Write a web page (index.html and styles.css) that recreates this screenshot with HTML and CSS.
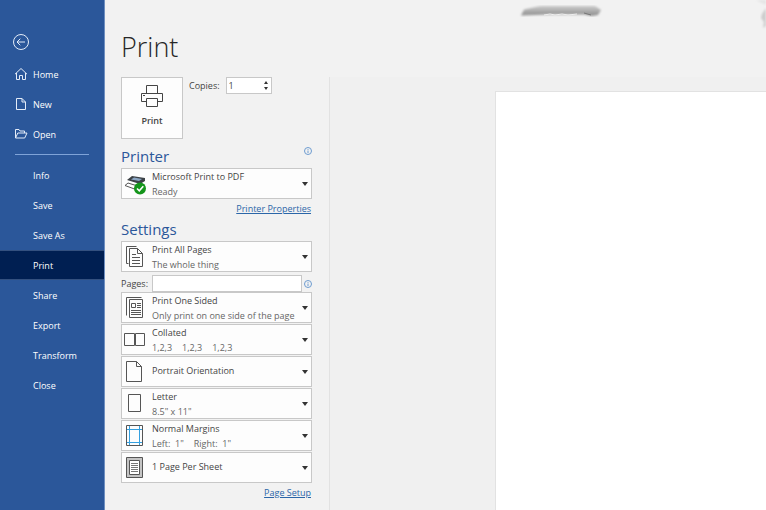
FILE: index.html
```html
<!DOCTYPE html>
<html lang="en">
<head>
  <meta charset="UTF-8">
  <meta name="viewport" content="width=device-width, initial-scale=1">
  <title>Print</title>
  <link rel="stylesheet" href="styles.css">
</head>
<body>
<nav class="sidebar">
  <button class="back" type="button" aria-label="Back">
    <svg width="18" height="18" viewBox="0 0 18 18"><circle cx="9" cy="9" r="7.5"/><path d="M13 9H5M8.3 5.7L5 9l3.3 3.3"/></svg>
  </button>
  <a href="#home"><svg width="14" height="14" viewBox="0 0 14 14"><path d="M1 7.2L7 1.500l6 5.700M2.500 6v6.500h3V8.500h3v4h3V6"/></svg>Home</a>
  <a href="#new"><svg width="14" height="14" viewBox="0 0 14 14"><path d="M2.500 1.500h5.500l3.500 3.500v7.500h-9zM8 1.500V5h3.500"/></svg>New</a>
  <a href="#open"><svg width="14" height="14" viewBox="0 0 14 14"><path d="M1.500 11V2.500h3.500l1 1.500h4.500v2M1.500 11l2.300-5H13l-2.300 5z"/></svg>Open</a>
  <hr>
  <a href="#info">Info</a>
  <a href="#save">Save</a>
  <a href="#save-as">Save As</a>
  <a href="#print" class="active" aria-current="page">Print</a>
  <a href="#share">Share</a>
  <a href="#export">Export</a>
  <a href="#transform">Transform</a>
  <a href="#close">Close</a>
</nav>

<main>
  <h1>Print</h1>
  <div class="panes">
    <form class="settings">
      <div class="top-row">
        <button class="print-btn" type="button">
          <svg width="24" height="24" viewBox="0 0 24 24"><path d="M6.500 9.500V1.500h11v8M6.500 17.500h-5v-8h21v8h-5M6.500 14.500h11v8h-11zM3 11.500h2"/></svg>
          Print
        </button>
        <label for="copies">Copies:</label>
        <div class="spinner">
          <input id="copies" type="number" value="1" min="1">
          <div class="steps">
            <button type="button" aria-label="More copies"><svg width="4" height="3" viewBox="0 0 4 3"><path d="M0 3l2-3 2 3z"/></svg></button>
            <button type="button" aria-label="Fewer copies"><svg width="4" height="3" viewBox="0 0 4 3"><path d="M0 0l2 3 2-3z"/></svg></button>
          </div>
        </div>
      </div>

      <div class="heading">
        <h2>Printer</h2>
        <svg class="info" width="8" height="8" viewBox="0 0 8 8"><circle cx="4" cy="4" r="3.500"/><path d="M4 3.500v2.500M4 2v.8"/></svg>
      </div>
      <div class="option two-line">
        <select aria-label="Printer"><option>Microsoft Print to PDF</option></select>
        <svg class="icon" width="26" height="26" viewBox="0 0 26 26">
          <path d="M5 10l5-4 13 2v3l-5 3z" fill="#3c4146"/>
          <path d="M9 9.500l3-2 8 1.500-3 2z" fill="#8ba6c4"/>
          <path d="M3 15.500l3-2.500 8 2.500-1.500 3.500z" fill="#fff" stroke="#555"/>
          <circle cx="18" cy="18.500" r="6" fill="#14951b"/>
          <path d="M15 18.500l2.300 2.300 4-4.500" fill="none" stroke="#fff" stroke-width="1.600"/>
        </svg>
        <span class="hint">Ready</span>
      </div>
      <a class="more" href="#printer-properties">Printer Properties</a>

      <div class="heading">
        <h2>Settings</h2>
      </div>
      <div class="option two-line">
        <select aria-label="Pages to print"><option>Print All Pages</option></select>
        <svg class="icon" width="26" height="26" viewBox="0 0 26 26"><path class="line" d="M4.500 20.500v-17h10M4.500 20.500h2M7.500 5.500h8l5 5v13h-13zM15.500 5.500v5h5M10 11.500h4M10 14.500h8M10 17.500h8M10 20.500h8"/></svg>
        <span class="hint">The whole thing</span>
      </div>
      <div class="pages-row">
        <label for="pages">Pages:</label>
        <input id="pages" type="text">
        <svg class="info" width="8" height="8" viewBox="0 0 8 8"><circle cx="4" cy="4" r="3.500"/><path d="M4 3.500v2.500M4 2v.8"/></svg>
      </div>
      <div class="option-list">
        <div class="option two-line">
          <select aria-label="Sides"><option>Print One Sided</option></select>
          <svg class="icon" width="26" height="26" viewBox="0 0 26 26"><path class="line" d="M4.500 21.500v-18h15M7.500 5.500h13v18h-13zM9.500 9.500h4v4h-4zM15 9.500h4M15 11.500h4M15 13.500h4M9 16.500h10M9 18.500h10M9 20.500h10"/></svg>
          <span class="hint">Only print on one side of the page</span>
        </div>
        <div class="option two-line">
          <select aria-label="Collation"><option>Collated</option></select>
          <svg class="icon" width="26" height="26" viewBox="0 0 26 26"><path class="line" d="M2.500 7.500h10v12h-10zM13.500 7.500h9v12h-9z"/></svg>
          <span class="hint gaps"><span>1,2,3</span><span>1,2,3</span><span>1,2,3</span></span>
        </div>
        <div class="option">
          <select aria-label="Orientation"><option>Portrait Orientation</option></select>
          <svg class="icon" width="26" height="26" viewBox="0 0 26 26"><path class="line" d="M4.500 3.500h10l5 5v15h-15zM14.500 3.500v5h5"/></svg>
        </div>
        <div class="option two-line">
          <select aria-label="Paper size"><option>Letter</option></select>
          <svg class="icon" width="26" height="26" viewBox="0 0 26 26"><path class="line" d="M6.500 4.500h12v17h-12z"/></svg>
          <span class="hint">8.5" x 11"</span>
        </div>
        <div class="option two-line">
          <select aria-label="Margins"><option>Normal Margins</option></select>
          <svg class="icon" width="26" height="26" viewBox="0 0 26 26"><path d="M7.500 4v19M17.500 4v19M5 7.500h15M5 20.500h15" fill="none" stroke="#35a0e0"/><path class="line" d="M4.500 3.500h16v20h-16z"/></svg>
          <span class="hint gaps"><span>Left:&nbsp; 1"</span><span>Right:&nbsp; 1"</span></span>
        </div>
        <div class="option">
          <select aria-label="Pages per sheet"><option>1 Page Per Sheet</option></select>
          <svg class="icon" width="26" height="26" viewBox="0 0 26 26"><path d="M4.500 3.500h16v20h-16z" fill="#c4c4c4" stroke="#555"/><path d="M7.500 6.500h10v14h-10z" fill="#fff" stroke="#555"/><path d="M9 9.500h7M9 11.500h7M9 13.500h7M9 15.500h7M9 17.500h7" stroke="#777"/></svg>
        </div>
      </div>
      <a class="more" href="#page-setup">Page Setup</a>
    </form>
    <section class="preview" aria-label="Preview">
      <div class="paper"></div>
    </section>
  </div>
  <svg class="smudge" width="266" height="40" viewBox="0 0 266 40">
    <defs>
      <linearGradient id="ink" x1="0" y1="0" x2="0" y2="1"><stop offset="0" stop-color="#ccc"/><stop offset="1" stop-color="#8c8c8c"/></linearGradient>
      <filter id="soft"><feGaussianBlur stdDeviation="1"/></filter>
    </defs>
    <path d="M21 15.500l3-6 16-3.500h55l6 4-3 5-6 1-8-1.500H50z" fill="url(#ink)" filter="url(#soft)"/>
    <path d="M84 13l7 2" fill="none" stroke="#777"/>
    <path d="M44 15l6-1 5 1 7-1 6 1 9-1" fill="none" stroke="#eee"/>
    <path d="M256 0h10v5z" fill="#e4e4e4" filter="url(#soft)"/>
    <path d="M262 14l4-6v18l-3 2 1-6-3-4z" fill="#ccc" filter="url(#soft)"/>
  </svg>
</main>
</body>
</html>
```

FILE: styles.css
```css
* { box-sizing: border-box; }
body { margin: 0; display: flex; min-height: 100vh; overflow: hidden; background: #f2f2f2; color: #444; font: 9px/15px "Open Sans", "Noto Sans", sans-serif; }
button, input, select { font: inherit; color: inherit; margin: 0; padding: 0; border: none; background: none; }
svg { display: block; flex: none; }

/* left navigation */
.sidebar { flex: none; width: 105px; padding-top: 33px; background: #2b579a; border-right: 1px solid #6f8fc0; color: #fff; }
.sidebar svg { fill: none; stroke: #e4ecf8; }
.back { display: block; margin: 0 0 8px 12px; cursor: pointer; }
.sidebar a { display: flex; align-items: center; gap: 5px; height: 30px; padding-left: 33px; color: #fff; text-decoration: none; }
.sidebar a svg { margin-left: -19px; }
.sidebar a:hover { background: #1e4480; }
.sidebar a.active { background: #001f52; border: 1px solid #33507f; border-width: 1px 0; }
.sidebar hr { margin: 5px 15px; border: none; border-top: 1px solid #7fa3d8; }

main { position: relative; flex: 1; min-width: 0; display: flex; flex-direction: column; padding-left: 16px; }
h1 { margin: 0; padding: 27px 0 10px; font-size: 27px; line-height: 40px; font-weight: 300; color: #262626; }
.panes { display: flex; flex: 1; }
.settings { flex: none; width: 191px; }

.top-row { display: flex; align-items: flex-start; gap: 6px; }
.top-row label { line-height: 17px; }
.print-btn { display: flex; flex-direction: column; align-items: center; gap: 5px; width: 62px; height: 62px; padding-top: 6px; background: #fdfdfd; border: 1px solid #c8c8c8; font-weight: 600; cursor: pointer; }
.print-btn svg { fill: none; stroke: #444; }
.spinner { display: flex; width: 46px; height: 17px; background: #fff; border: 1px solid #c8c8c8; }
.spinner input { flex: 1; min-width: 0; padding-left: 2px; appearance: textfield; }
.spinner input::-webkit-inner-spin-button { display: none; }
.steps { display: flex; flex-direction: column; justify-content: space-evenly; padding-right: 3px; }
.steps button { line-height: 0; }
.steps svg { fill: #333; }

.heading { display: flex; justify-content: space-between; height: 24px; margin-top: 5px; }
.more + .heading { margin-top: 1px; }
h2 { margin: 0; font-size: 15px; line-height: 24px; font-weight: 400; color: #2b579a; }
.info { margin-top: 3px; fill: none; stroke: #6d9bd0; stroke-width: 1; }

/* drop-downs: the select fills the box, icon and hint lie in its padding */
.option { display: grid; grid-template: 15px 14px / 30px 1fr; height: 31px; background: #fdfdfd; border: 1px solid #c8c8c8; }
.option select { grid-area: 1 / 1 / 3 / 3; appearance: none; padding: 0 16px 2px 30px; line-height: 15px; }
.option.two-line select { padding-bottom: 14px; }
.option::after { content: ""; grid-area: 1 / 2 / 3 / 3; justify-self: end; align-self: center; margin-right: 3px; border: 3px solid transparent; border-top: 4px solid #333; border-bottom: none; pointer-events: none; }
.icon { grid-area: 1 / 1 / 3 / 2; margin-top: 1px; pointer-events: none; }
.hint { grid-area: 2 / 2; color: #666; pointer-events: none; white-space: nowrap; }
.gaps { display: flex; gap: 10px; }
.line { fill: none; stroke: #555; }
.option-list { display: flex; flex-direction: column; gap: 1px; }

.more { display: block; width: fit-content; margin: 2px 1px 0 auto; color: #2b66a8; }
.pages-row { display: flex; align-items: center; gap: 2px; padding: 3px 0 0; }
.pages-row label { width: 29px; }
.pages-row input { flex: 1; min-width: 0; height: 17px; padding: 0 3px; background: #fff; border: 1px solid #c8c8c8; }
.pages-row .info { margin: 0; }

.preview { flex: 1; margin-left: 17px; padding: 14px 0 0 165px; background: #f0f0f0; border-left: 1px solid #e2e2e2; display: flex; }
.paper { flex: 1; background: #fff; border: 1px solid #e2e2e2; border-width: 1px 0 0 1px; }

.smudge { position: absolute; top: 0; right: 0; pointer-events: none; }
```
